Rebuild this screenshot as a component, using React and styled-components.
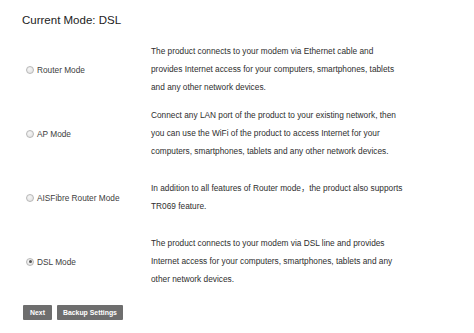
import React from "react";
import styled, { createGlobalStyle } from "styled-components";

const Global = createGlobalStyle`
  html, body { margin: 0; padding: 0; background: #fff; }
  body { font-family: "Liberation Sans", Arial, "Noto Sans CJK SC", sans-serif; }
`;

const Page = styled.div`
  padding: 12px 0 0 22px;
  width: 452px;
`;

const Title = styled.h1`
  margin: 0 0 10px;
  font-size: 11.5px;
  line-height: 16px;
  font-weight: normal;
  color: #222;
`;

const ModeRow = styled.div`
  display: grid;
  grid-template-columns: 129px 1fr;
  align-items: center;
  height: 64px;
`;

const Label = styled.label`
  display: flex;
  align-items: center;
  gap: 3px;
  padding-left: 4px;
  font-size: 8.3px;
  color: #404040;
  line-height: 12px;
`;

const Radio = styled.span`
  box-sizing: border-box;
  width: 8px;
  height: 8px;
  border-radius: 50%;
  border: 1px solid #b8b8b8;
  background: radial-gradient(circle at 40% 35%, #f6f6f6 0%, #dedede 100%);
  display: flex;
  align-items: center;
  justify-content: center;
  margin-top: -1px;
  &::after {
    content: "";
    width: 3px;
    height: 3px;
    border-radius: 50%;
    background: ${(p) => (p.$checked ? "#555" : "transparent")};
  }
`;

const Desc = styled.div`
  font-size: 8.3px;
  line-height: 17.7px;
  color: #2e2e2e;
  white-space: nowrap;
`;

const Line = styled.div``;

const Actions = styled.div`
  display: flex;
  gap: 5px;
  margin-top: 11px;
  padding-left: 1px;
`;

const Button = styled.button`
  height: 15px;
  padding: 0 ${(p) => p.$pad}px;
  border: none;
  border-radius: 1px;
  background: #6e6e6e;
  color: #fff;
  font-family: "Liberation Sans", Arial, sans-serif;
  font-weight: bold;
  font-size: 6.9px;
  line-height: 15px;
`;

const modes = [
  {
    label: "Router Mode",
    lines: [
      "The product connects to your modem via Ethernet cable and",
      "provides Internet access for your computers, smartphones, tablets",
      "and any other network devices.",
    ],
  },
  {
    label: "AP Mode",
    lines: [
      "Connect any LAN port of the product to your existing network, then",
      "you can use the WiFi of the product to access Internet for your",
      "computers, smartphones, tablets and any other network devices.",
    ],
  },
  {
    label: "AISFibre Router Mode",
    lines: [
      "In addition to all features of Router mode，the product also supports",
      "TR069 feature.",
    ],
  },
  {
    label: "DSL Mode",
    checked: true,
    lines: [
      "The product connects to your modem via DSL line and provides",
      "Internet access for your computers, smartphones, tablets and any",
      "other network devices.",
    ],
  },
];

export default function App() {
  return (
    <Page>
      <Global />
      <Title>Current Mode: DSL</Title>
      {modes.map((m) => (
        <ModeRow key={m.label}>
          <Label>
            <Radio $checked={m.checked} />
            {m.label}
          </Label>
          <Desc>
            {m.lines.map((l) => (
              <Line key={l}>{l}</Line>
            ))}
          </Desc>
        </ModeRow>
      ))}
      <Actions>
        <Button $pad={7}>Next</Button>
        <Button $pad={6}>Backup Settings</Button>
      </Actions>
    </Page>
  );
}
